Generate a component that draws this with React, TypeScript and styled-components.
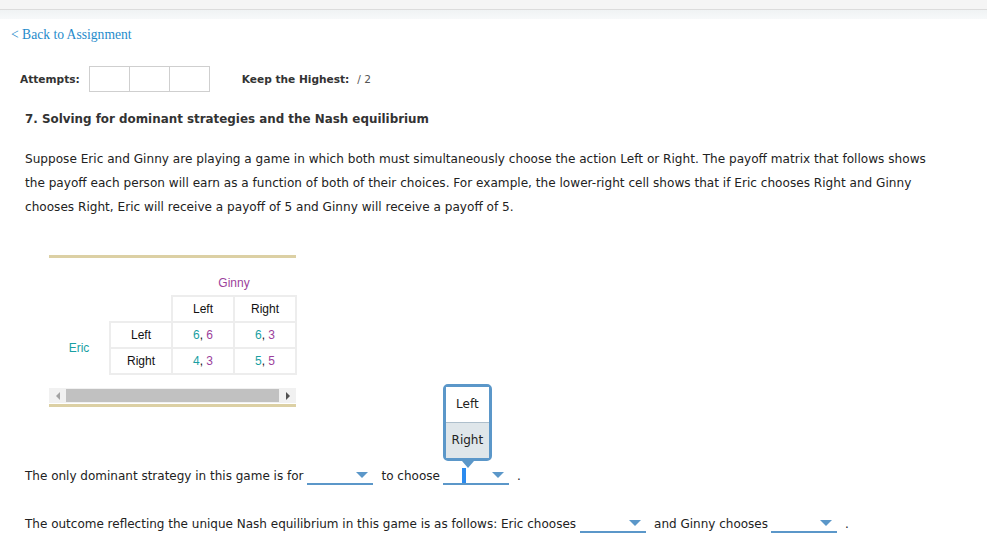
import React from 'react';
import styled, { createGlobalStyle } from 'styled-components';

const GlobalStyle = createGlobalStyle`
  html, body {
    margin: 0;
    padding: 0;
    background: #fff;
  }
  body {
    font-family: "DejaVu Sans", Verdana, sans-serif;
    color: #222;
  }
`;

const TopBar = styled.div`
  height: 9px;
  background: #f5f5f5;
  border-bottom: 1px solid #dcdcdc;
`;

const SubBar = styled.div`
  height: 9px;
  background: linear-gradient(#f0f3f4, #f7f9fa);
`;

const BackLink = styled.a`
  display: block;
  width: max-content;
  margin: 8px 0 0 11px;
  font-family: "Liberation Serif", Georgia, serif;
  font-size: 13.6px;
  line-height: 16px;
  color: #1f8bcb;
  text-decoration: none;
`;

const AttemptsRow = styled.div`
  display: flex;
  align-items: center;
  margin: 23px 0 0 20px;
  font-size: 10.6px;
  font-weight: bold;
  color: #333;
`;

const BoxGroup = styled.div`
  display: flex;
  margin-left: 9px;
`;

const AttemptBox = styled.div`
  width: 39px;
  height: 24px;
  border: 1px solid #cfcfcf;
  & + & {
    border-left: none;
  }
`;

const KeepLabel = styled.span`
  margin-left: 32px;
`;

const Score = styled.span`
  margin-left: 8px;
  font-weight: normal;
  color: #555;
`;

const Heading = styled.h2`
  margin: 18px 0 0 25px;
  font-size: 11.9px;
  line-height: 18px;
  font-weight: bold;
  color: #333;
`;

const Paragraph = styled.p`
  width: 905px;
  margin: 19px 0 0 25px;
  font-size: 12.1px;
  line-height: 24px;
  color: #222;
`;

const Matrix = styled.div`
  width: 247px;
  margin: 36px 0 0 49px;
  border-top: 3px solid #dcd0a4;
  border-bottom: 3px solid #dcd0a4;
`;

const Table = styled.table`
  margin-top: 13px;
  border-collapse: collapse;
  font-family: "Liberation Sans", Arial, sans-serif;
  font-size: 12px;
  table-layout: fixed;
  width: 247px;
`;

const Cell = styled.td<{ $bordered?: boolean; $color?: string }>`
  height: 24px;
  padding: 0;
  text-align: center;
  vertical-align: middle;
  color: ${(p) => p.$color || '#111'};
  border: ${(p) => (p.$bordered ? '2px solid #ededed' : 'none')};
`;

const Eric = styled.span`
  color: #1a9fa3;
`;

const Ginny = styled.span`
  color: #9c3f9c;
`;

const Scrollbar = styled.div`
  display: flex;
  align-items: center;
  height: 15px;
  margin: 13px 0 1px;
  background: #f1f1f1;
`;

const ScrollArrow = styled.div<{ $dir: 'left' | 'right'; $dark?: boolean }>`
  width: 17px;
  display: flex;
  justify-content: center;
  &::before {
    content: '';
    border-top: 4px solid transparent;
    border-bottom: 4px solid transparent;
    ${(p) =>
      p.$dir === 'left'
        ? `border-right: 4px solid ${p.$dark ? '#505050' : '#a3a3a3'};`
        : `border-left: 4px solid ${p.$dark ? '#505050' : '#a3a3a3'};`}
  }
`;

const Thumb = styled.div`
  flex: 1;
  height: 13px;
  background: #c1c1c1;
`;

const Sentence = styled.div<{ $gap: number }>`
  display: flex;
  align-items: flex-end;
  margin: ${(p) => p.$gap}px 0 0 25px;
  font-size: 12px;
  line-height: 18px;
  color: #222;
`;

const SelectBox = styled.div<{ $ml: number }>`
  position: relative;
  width: 66px;
  height: 18px;
  margin: 0 8px 0 ${(p) => p.$ml}px;
  border-bottom: 2px solid #5b97c9;
  &::after {
    content: '';
    position: absolute;
    right: 5px;
    top: 7px;
    border-left: 6px solid transparent;
    border-right: 6px solid transparent;
    border-top: 6px solid #5b97c9;
  }
`;

const Cursor = styled.div`
  position: absolute;
  left: 19px;
  bottom: 0;
  width: 4px;
  height: 15px;
  background: #2b8bef;
`;

const Popup = styled.div`
  position: absolute;
  left: 0;
  bottom: 22px;
  width: 43px;
  border: 3px solid #5b97c9;
  border-radius: 5px;
  background: #fff;
  &::after {
    content: '';
    position: absolute;
    left: 16px;
    bottom: -10px;
    border-left: 6px solid transparent;
    border-right: 6px solid transparent;
    border-top: 7px solid #5b97c9;
  }
`;

const Option = styled.div<{ $active?: boolean }>`
  height: 35px;
  line-height: 35px;
  text-align: center;
  font-size: 12px;
  color: #222;
  background: ${(p) => (p.$active ? '#dfe6ea' : '#fff')};
  & + & {
    border-top: 1px solid #aebfcc;
  }
`;

export default function App() {
  return (
    <>
      <GlobalStyle />
      <TopBar />
      <SubBar />
      <BackLink href="#">&lt; Back to Assignment</BackLink>
      <AttemptsRow>
        <span>Attempts:</span>
        <BoxGroup>
          <AttemptBox />
          <AttemptBox />
          <AttemptBox />
        </BoxGroup>
        <KeepLabel>Keep the Highest:</KeepLabel>
        <Score>/ 2</Score>
      </AttemptsRow>
      <Heading>7. Solving for dominant strategies and the Nash equilibrium</Heading>
      <Paragraph>
        Suppose Eric and Ginny are playing a game in which both must simultaneously choose the action Left or Right.
        The payoff matrix that follows shows the payoff each person will earn as a function of both of their choices.
        For example, the lower-right cell shows that if Eric chooses Right and Ginny chooses Right, Eric will receive a
        payoff of 5 and Ginny will receive a payoff of 5.
      </Paragraph>
      <Matrix>
        <Table>
          <colgroup>
            <col style={{ width: 61 }} />
            <col style={{ width: 62 }} />
            <col style={{ width: 62 }} />
            <col style={{ width: 62 }} />
          </colgroup>
          <tbody>
            <tr>
              <Cell />
              <Cell />
              <Cell colSpan={2} $color="#9c3f9c">
                Ginny
              </Cell>
            </tr>
            <tr>
              <Cell />
              <Cell />
              <Cell $bordered>Left</Cell>
              <Cell $bordered>Right</Cell>
            </tr>
            <tr>
              <Cell rowSpan={2} $color="#1a9fa3">
                Eric
              </Cell>
              <Cell $bordered>Left</Cell>
              <Cell $bordered>
                <Eric>6</Eric>, <Ginny>6</Ginny>
              </Cell>
              <Cell $bordered>
                <Eric>6</Eric>, <Ginny>3</Ginny>
              </Cell>
            </tr>
            <tr>
              <Cell $bordered>Right</Cell>
              <Cell $bordered>
                <Eric>4</Eric>, <Ginny>3</Ginny>
              </Cell>
              <Cell $bordered>
                <Eric>5</Eric>, <Ginny>5</Ginny>
              </Cell>
            </tr>
          </tbody>
        </Table>
        <Scrollbar>
          <ScrollArrow $dir="left" />
          <Thumb />
          <ScrollArrow $dir="right" $dark />
        </Scrollbar>
      </Matrix>
      <Sentence $gap={58}>
        The only dominant strategy in this game is for
        <SelectBox $ml={4} />
        to choose
        <SelectBox $ml={3}>
          <Cursor />
          <Popup>
            <Option>Left</Option>
            <Option $active>Right</Option>
          </Popup>
        </SelectBox>
        .
      </Sentence>
      <Sentence $gap={28}>
        The outcome reflecting the unique Nash equilibrium in this game is as follows: Eric chooses
        <SelectBox $ml={4} />
        and Ginny chooses
        <SelectBox $ml={3} />
        .
      </Sentence>
    </>
  );
}
